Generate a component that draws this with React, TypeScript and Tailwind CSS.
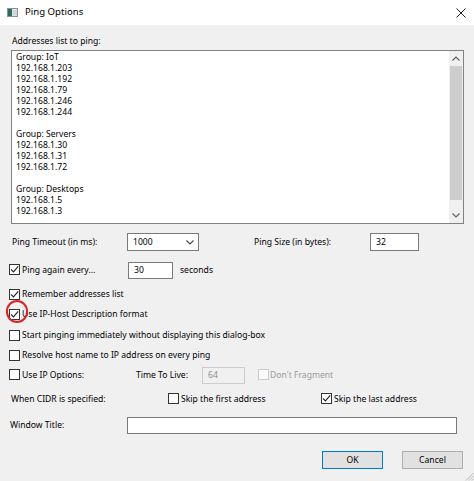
import React from 'react';

const IPS_TEXT = [
  'Group: IoT',
  '192.168.1.203',
  '192.168.1.192',
  '192.168.1.79',
  '192.168.1.246',
  '192.168.1.244',
  '',
  'Group: Servers',
  '192.168.1.30',
  '192.168.1.31',
  '192.168.1.72',
  '',
  'Group: Desktops',
  '192.168.1.5',
  '192.168.1.3',
];

// Casilla estilo Windows 10
const Check: React.FC<{ checked?: boolean; disabled?: boolean }> = ({ checked = false, disabled = false }) => (
  <span
    className={
      disabled
        ? 'w-[11px] h-[11px] border border-[#cccccc] bg-[#fbfbfb] flex items-center justify-center shrink-0'
        : 'w-[11px] h-[11px] border border-[#333333] bg-white flex items-center justify-center shrink-0'
    }
  >
    {checked && (
      <svg width="9" height="9" viewBox="0 0 9 9">
        <path d="M1 4.4 L3.4 6.9 L8.2 1.4" fill="none" stroke="#222" strokeWidth="1.1" />
      </svg>
    )}
  </span>
);

const CheckRow: React.FC<{ checked?: boolean; label: string; className?: string }> = ({ checked, label, className = '' }) => (
  <div className={`flex items-center h-[20px] ${className}`}>
    <Check checked={checked} />
    <span className="ml-[2px]">{label}</span>
  </div>
);

const Chevron: React.FC<{ up?: boolean; color?: string }> = ({ up = false, color = '#606060' }) => (
  <svg width="8" height="5" viewBox="0 0 8 5">
    <path d={up ? 'M0.5 4.5 L4 1 L7.5 4.5' : 'M0.5 0.5 L4 4 L7.5 0.5'} fill="none" stroke={color} strokeWidth="1.1" />
  </svg>
);

export default function App() {
  return (
    <div className="w-[474px] h-[481px] bg-[#f0f0f0] relative overflow-hidden font-['Noto_Sans',sans-serif] text-[8.6px] text-black">
      {/* Barra de título */}
      <div className="h-[25px] bg-white flex items-center">
        <svg className="ml-[7px]" width="11" height="9" viewBox="0 0 11 9">
          <rect x="0.5" y="0.5" width="10" height="8" fill="#e8ecec" stroke="#8a9494" />
          <rect x="1" y="1" width="4" height="7" fill="#2f6e5c" />
          <rect x="5.5" y="2" width="4.5" height="5.5" fill="#cfd8dc" />
        </svg>
        <span className="ml-[7px] text-[9.6px]">Ping Options</span>
        <svg className="ml-auto mr-[8px]" width="10" height="10" viewBox="0 0 10 10">
          <path d="M0.5 0.5 L9.5 9.5 M9.5 0.5 L0.5 9.5" stroke="#222" strokeWidth="1" />
        </svg>
      </div>

      <div className="flex flex-col pl-[9px] pr-[10px]">
        <div className="h-[14px] mt-[9px] flex items-center pl-[3px]">Addresses list to ping:</div>

        {/* Lista de direcciones */}
        <div className="mt-[2px] ml-[2px] h-[174px] border border-[#828282] bg-white flex">
          <div className="flex-1 pl-[4px] pt-[1px] text-[8.6px]">
            {IPS_TEXT.map((line, i) => (
              <div key={i} className="h-[11px] leading-[11px]">{line}</div>
            ))}
          </div>
          <div className="w-[14px] flex flex-col bg-[#f0f0f0]">
            <div className="h-[15px] flex items-center justify-center">
              <Chevron up />
            </div>
            <div className="flex-1 px-[1px]">
              <div className="h-[134px] bg-[#cdcdcd]" />
            </div>
            <div className="h-[16px] flex items-center justify-center">
              <Chevron />
            </div>
          </div>
        </div>

        {/* Timeout y tamaño */}
        <div className="mt-[9px] h-[18px] flex items-center">
          <div className="w-[118px] pl-[3px]">Ping Timeout (in ms):</div>
          <div className="w-[72px] h-[18px] border border-[#7a7a7a] bg-white flex items-center pl-[5px] pr-[4px]">
            <span>1000</span>
            <span className="ml-auto flex"><Chevron color="#444" /></span>
          </div>
          <div className="w-[171px] pl-[55px]">Ping Size (in bytes):</div>
          <div className="w-[49px] h-[18px] border border-[#7a7a7a] bg-white flex items-center pl-[5px]">32</div>
        </div>

        <div className="mt-[10px] h-[18px] flex items-center">
          <div className="w-[119px] flex items-center">
            <Check checked />
            <span className="ml-[2px]">Ping again every...</span>
          </div>
          <div className="w-[45px] h-[17px] border border-[#7a7a7a] bg-white flex items-center pl-[5px]">30</div>
          <span className="ml-[7px]">seconds</span>
        </div>

        <CheckRow className="mt-[5px]" checked label="Remember addresses list" />
        <div className="relative">
          <CheckRow checked label="Use IP-Host Description format" />
          <div className="absolute left-[-3px] top-[-4px] w-[22px] h-[23px] rounded-full border-[2px] border-[#d9252a]" />
        </div>
        <CheckRow className="mt-[1px]" label="Start pinging immediately without displaying this dialog-box" />
        <CheckRow label="Resolve host name to IP address on every ping" />

        <div className="h-[20px] flex items-center">
          <div className="w-[127px] flex items-center">
            <Check />
            <span className="ml-[2px]">Use IP Options:</span>
          </div>
          <div className="w-[66px]">Time To Live:</div>
          <div className="w-[43px] h-[17px] border border-[#cccccc] bg-[#f0f0f0] flex items-center pl-[5px] text-[#8d8d8d]">64</div>
          <div className="ml-[13px] flex items-center">
            <Check disabled />
            <span className="ml-[1px] text-[#9a9a9a]">Don't Fragment</span>
          </div>
        </div>

        <div className="mt-[4px] h-[20px] flex items-center">
          <div className="w-[159px] pl-[2px]">When CIDR is specified:</div>
          <div className="w-[153px] flex items-center">
            <Check />
            <span className="ml-[2px]">Skip the first address</span>
          </div>
          <div className="flex items-center">
            <Check checked />
            <span className="ml-[2px]">Skip the last address</span>
          </div>
        </div>

        <div className="mt-[6px] h-[20px] flex items-center">
          <div className="w-[118px] pl-[1px]">Window Title:</div>
          <div className="w-[330px] h-[17px] border border-[#7a7a7a] bg-white" />
        </div>

        {/* Botones */}
        <div className="mt-[16px] flex justify-end pr-[1px] gap-[19px]">
          <button className="w-[61px] h-[18px] bg-[#e1e1e1] border border-[#0078d7] flex items-center justify-center">OK</button>
          <button className="w-[61px] h-[18px] bg-[#e1e1e1] border border-[#adadad] flex items-center justify-center">Cancel</button>
        </div>
      </div>

      {/* Agarre de redimensionado */}
      <svg className="absolute right-0 bottom-0" width="10" height="10" viewBox="0 0 10 10">
        <path d="M9.5 2 L2 9.5 M9.5 5 L5 9.5 M9.5 8 L8 9.5" stroke="#b8b8b8" strokeWidth="1" />
      </svg>
    </div>
  );
}
